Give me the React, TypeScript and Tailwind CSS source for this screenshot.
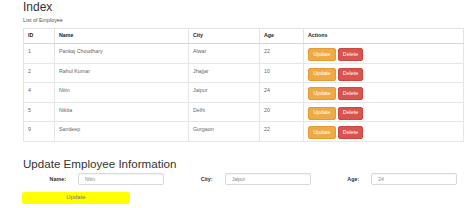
import React from "react";

const rows = [
  { id: 1, name: "Pankaj Choudhary", city: "Alwar", age: 22 },
  { id: 2, name: "Rahul Kumar", city: "Jhajjar", age: 10 },
  { id: 4, name: "Nitin", city: "Jaipur", age: 24 },
  { id: 5, name: "Nikita", city: "Delhi", age: 20 },
  { id: 9, name: "Sandeep", city: "Gurgaon", age: 22 },
];

export default function App() {
  return (
    <div
      className="w-[474px] h-[208px] bg-white overflow-hidden pl-[23px] text-[#333]"
      style={{ fontFamily: '"Liberation Sans", Arial, sans-serif' }}
    >
      <h1 className="text-[12px] leading-[14px] pt-[0px] text-[#333]">Index</h1>
      <p className="text-[5.4px] leading-[7px] mt-[3px] text-[#555]">List of Employee</p>
      <table className="mt-[4px] w-[440px] border-collapse table-fixed text-[5.3px]">
        <colgroup>
          <col className="w-[31px]" />
          <col className="w-[134px]" />
          <col className="w-[71px]" />
          <col className="w-[44px]" />
          <col className="w-[160px]" />
        </colgroup>
        <thead>
          <tr className="h-[15px]">
            {["ID", "Name", "City", "Age", "Actions"].map((h) => (
              <th
                key={h}
                className="border border-[#e3e3e3] border-b-[#d6d6d6] text-left font-bold px-[4px] align-middle text-[#222]"
              >
                {h}
              </th>
            ))}
          </tr>
        </thead>
        <tbody>
          {rows.map((r) => (
            <tr key={r.id} className="h-[19.6px]">
              <td className="border border-[#e6e6e6] px-[4px] pt-[4px] align-top text-[#666]">{r.id}</td>
              <td className="border border-[#e6e6e6] px-[4px] pt-[4px] align-top text-[#666]">{r.name}</td>
              <td className="border border-[#e6e6e6] px-[4px] pt-[4px] align-top text-[#666]">{r.city}</td>
              <td className="border border-[#e6e6e6] px-[4px] pt-[4px] align-top text-[#666]">{r.age}</td>
              <td className="border border-[#e6e6e6] px-[4px] pt-[4px] align-top">
                <div className="flex gap-[2px]">
                  <button className="w-[28px] h-[13px] rounded-[2px] bg-[#efa945] border border-[#e59b34] text-white text-[5.3px]">
                    Update
                  </button>
                  <button className="w-[25px] h-[13px] rounded-[2px] bg-[#d9534f] border border-[#cf4540] text-white text-[5.3px]">
                    Delete
                  </button>
                </div>
              </td>
            </tr>
          ))}
        </tbody>
      </table>
      <h2 className="mt-[15px] text-[11.6px] leading-[14px] text-[#333]">Update Employee Information</h2>
      <div className="grid grid-cols-3 w-[440px] mt-[2px]">
        {[
          ["Name:", "Nitin"],
          ["City:", "Jaipur"],
          ["Age:", "24"],
        ].map(([l, v]) => (
          <div key={l} className="flex items-center h-[13px]">
            <span className="w-[43px] text-right text-[5.4px] font-bold text-[#333]">{l}</span>
            <div className="ml-[12px] w-[86px] h-[12px] border border-[#d9d9d9] rounded-[2px] flex items-center pl-[6px] text-[5px] text-[#888] shadow-[inset_0_1px_1px_rgba(0,0,0,0.05)]">
              {v}
            </div>
          </div>
        ))}
      </div>
      <button className="mt-[6px] -ml-[1px] w-[108px] h-[12px] bg-[#ffff00] rounded-[2px] text-[6px] text-[#777] flex items-center justify-center">
        Update
      </button>
    </div>
  );
}
